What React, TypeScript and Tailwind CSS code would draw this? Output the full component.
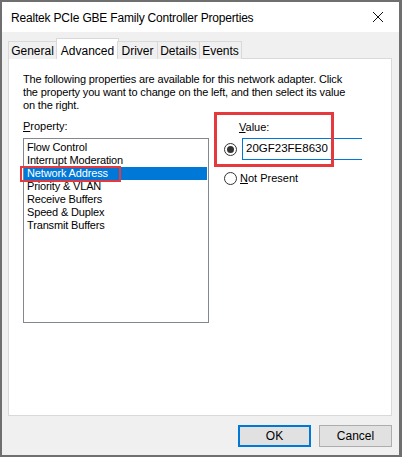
import React from 'react';

const tabs = [
  { id: 'general', label: 'General', w: 'w-[49px]' },
  { id: 'advanced', label: 'Advanced', w: 'w-[63px]' },
  { id: 'driver', label: 'Driver', w: 'w-[41px]' },
  { id: 'details', label: 'Details', w: 'w-[43px]' },
  { id: 'events', label: 'Events', w: 'w-[43px]' },
];

const properties = [
  'Flow Control',
  'Interrupt Moderation',
  'Network Address',
  'Priority & VLAN',
  'Receive Buffers',
  'Speed & Duplex',
  'Transmit Buffers',
];

const Radio = ({ checked }: { checked?: boolean }) => (
  <span className="flex h-[13px] w-[13px] shrink-0 items-center justify-center rounded-full border border-[#333333] bg-white">
    {checked && <span className="h-[7px] w-[7px] rounded-full bg-[#333333]" />}
  </span>
);

export default function App() {
  return (
    <div className="flex h-[457px] w-[402px] flex-col border-t-2 border-b-2 border-l-2 border-r-[3px] border-[#6f6f6f] font-['Liberation_Sans',Arial,sans-serif] text-[11px] text-black">
      {/* Title bar */}
      <div className="flex h-[30px] shrink-0 items-center justify-between bg-white pl-[9px] pr-[7px]">
        <span className="pt-px text-[12px] tracking-[-0.2px]">Realtek PCIe GBE Family Controller Properties</span>
        <svg width="30" height="30" viewBox="0 0 30 30" className="mr-[-1px]">
          <path d="M10 10 L20 20 M20 10 L10 20" stroke="#111" strokeWidth="1" fill="none" />
        </svg>
      </div>

      {/* Body */}
      <div className="flex flex-1 flex-col bg-[#f0f0f0] pl-[6px] pr-[7px]">
        {/* Tabs */}
        <div className="relative z-10 mt-[6px] -mb-px flex h-[21px] items-end pl-px">
          {tabs.map((t) =>
            t.id === 'advanced' ? (
              <div
                key={t.id}
                className={`${t.w} -mx-px flex h-[21px] items-start justify-center border border-b-0 border-[#d9d9d9] bg-white pt-[3px] text-[12px]`}
              >
                {t.label}
              </div>
            ) : (
              <div
                key={t.id}
                className={`${t.w} -ml-px flex h-[18px] items-center justify-center border border-b-0 border-[#d9d9d9] bg-[#f0f0f0] pt-px text-[12px]`}
              >
                {t.label}
              </div>
            )
          )}
        </div>

        {/* Panel */}
        <div className="flex h-[358px] flex-col border border-[#d9d9d9] bg-white pl-[14px] pt-[14px]">
          <p className="w-[330px] leading-[13px] tracking-[-0.15px]">
            The following properties are available for this network adapter. Click the property you want
            to change on the left, and then select its value on the right.
          </p>

          <div className="mt-[8px] flex gap-[15px]">
            {/* Property list */}
            <div className="flex w-[186px] flex-col">
              <span className="leading-[13px]">
                <span className="underline">P</span>roperty:
              </span>
              <div className="relative mt-[5px] h-[185px] border border-[#828790] pt-[2px]">
                {properties.map((p) => (
                  <div
                    key={p}
                    className={`mr-px h-[13px] pl-[3px] leading-[13px] tracking-[-0.15px] ${
                      p === 'Network Address' ? 'bg-[#0078d7] text-white' : ''
                    }`}
                  >
                    {p}
                  </div>
                ))}
                <div className="absolute left-[-4px] top-[27px] h-[16px] w-[101px] border-2 border-[#e5393d]" />
              </div>
            </div>

            {/* Value */}
            <div className="relative flex flex-col">
              <span className="pl-[15px] pt-px leading-[13px]">
                <span className="underline">V</span>alue:
              </span>
              <div className="mt-[4px] flex items-center">
                <Radio checked />
                <div className="ml-[5px] flex h-[22px] w-[120px] items-center border-y border-l border-[#0078d7] pl-[3px] text-[11.5px]">
                  20GF23FE8630
                </div>
              </div>
              <div className="mt-[12px] flex items-center">
                <Radio />
                <span className="ml-[3px] leading-[13px]">
                  <span className="underline">N</span>ot Present
                </span>
              </div>
              <div className="absolute left-[-10px] top-[-8px] h-[55px] w-[120px] border-[3px] border-[#e5393d]" />
            </div>
          </div>
        </div>

        {/* Buttons */}
        <div className="mt-[9px] flex justify-end gap-[8px]">
          <button className="h-[22px] w-[73px] border-2 border-[#0078d7] bg-[#e1e1e1] text-[12px]">OK</button>
          <button className="h-[22px] w-[73px] border border-[#adadad] bg-[#e1e1e1] text-[12px]">Cancel</button>
        </div>
      </div>
    </div>
  );
}
